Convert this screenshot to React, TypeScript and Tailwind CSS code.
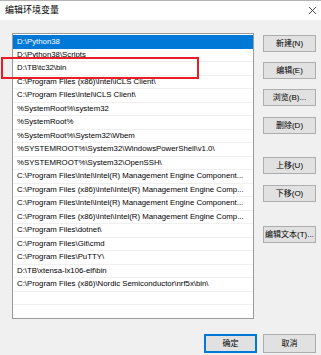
import React from 'react';

const paths: string[] = [
  'D:\\Python38',
  'D:\\Python38\\Scripts',
  'D:\\TB\\tc32\\bin',
  'C:\\Program Files (x86)\\Intel\\iCLS Client\\',
  'C:\\Program Files\\Intel\\iCLS Client\\',
  '%SystemRoot%\\system32',
  '%SystemRoot%',
  '%SystemRoot%\\System32\\Wbem',
  '%SYSTEMROOT%\\System32\\WindowsPowerShell\\v1.0\\',
  '%SYSTEMROOT%\\System32\\OpenSSH\\',
  'C:\\Program Files\\Intel\\Intel(R) Management Engine Component...',
  'C:\\Program Files (x86)\\Intel\\Intel(R) Management Engine Comp...',
  'C:\\Program Files\\Intel\\Intel(R) Management Engine Component...',
  'C:\\Program Files (x86)\\Intel\\Intel(R) Management Engine Comp...',
  'C:\\Program Files\\dotnet\\',
  'C:\\Program Files\\Git\\cmd',
  'C:\\Program Files\\PuTTY\\',
  'D:\\TB\\xtensa-lx106-elf\\bin',
  'C:\\Program Files (x86)\\Nordic Semiconductor\\nrf5x\\bin\\',
  '',
  '',
];

const font = "font-['Liberation_Sans','Noto_Sans_CJK_SC',sans-serif]";

const Btn: React.FC<{ label: string; className?: string; focused?: boolean }> = ({ label, className = '', focused }) => (
  <div
    className={`h-[17px] w-[53px] flex items-center justify-center bg-[#e1e1e1] text-[8px] text-black leading-none ${
      focused ? 'border-2 border-[#0078d7]' : 'border border-[#adadad]'
    } ${className}`}
  >
    {label}
  </div>
);

const App: React.FC = () => {
  return (
    <div className={`relative w-[321px] h-[355px] bg-[#f0f0f0] overflow-hidden flex flex-col ${font}`}>
      {/* title bar */}
      <div className="h-[20px] bg-white border-t border-[#b4b4b4] flex items-center justify-between pl-[5px] pr-[3px]">
        <span className="text-[9px] text-black leading-none">编辑环境变量</span>
        <svg width="9" height="9" viewBox="0 0 9 9" className="mr-[1px]">
          <path d="M1 1L8 8M8 1L1 8" stroke="#333" strokeWidth="0.9" fill="none" />
        </svg>
      </div>

      <div className="flex pt-[13px]">
        {/* path list */}
        <div className="ml-[12px] w-[242px] h-[286px] bg-white border border-[#9a9a9a] pt-[1px] overflow-hidden">
          {paths.map((p, i) => (
            <div
              key={i}
              className={`h-[13.5px] pl-[4px] flex items-center whitespace-nowrap overflow-hidden text-[7.8px] leading-none ${
                i === 0 ? 'bg-[#0078d7] text-white' : 'text-black border-b border-[#f0f0f0]'
              }`}
            >
              {p}
            </div>
          ))}
        </div>

        {/* side buttons */}
        <div className="ml-[9px] flex flex-col pt-[2px]">
          <Btn label="新建(N)" />
          <Btn label="编辑(E)" className="mt-[10px]" />
          <Btn label="浏览(B)..." className="mt-[10px]" />
          <Btn label="删除(D)" className="mt-[11px]" />
          <Btn label="上移(U)" className="mt-[23px]" />
          <Btn label="下移(O)" className="mt-[11px]" />
          <Btn label="编辑文本(T)..." className="mt-[24px]" />
        </div>
      </div>

      {/* bottom buttons */}
      <div className="flex justify-end gap-[6px] pr-[5px] mt-[15px]">
        <Btn label="确定" focused className="h-[19px]" />
        <Btn label="取消" className="h-[19px]" />
      </div>

      {/* red highlight annotation */}
      <div className="absolute left-[1px] top-[57px] w-[198px] h-[22px] border-2 border-[#ea1c24]" />
    </div>
  );
};

export default App;
